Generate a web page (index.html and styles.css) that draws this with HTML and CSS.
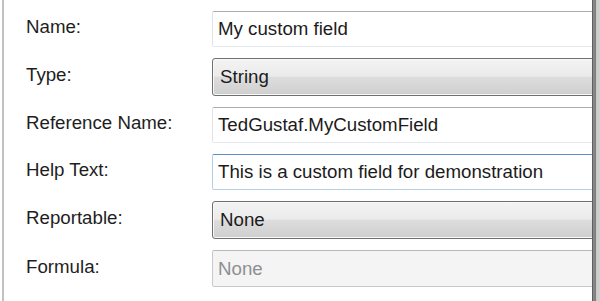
FILE: index.html
```html
<!DOCTYPE html>
<html lang="en">

<head>
    <meta charset="UTF-8">
    <title>Custom Field</title>
    <link rel="stylesheet" href="styles.css">
</head>

<body>
    <div class="window">
        <div class="panel">
            <div class="form">
                <label class="field-label">Name:</label>
                <div class="textbox">My custom field</div>

                <label class="field-label">Type:</label>
                <div class="combo">String</div>

                <label class="field-label">Reference Name:</label>
                <div class="textbox">TedGustaf.MyCustomField</div>

                <label class="field-label">Help Text:</label>
                <div class="textbox focused">This is a custom field for demonstration</div>

                <label class="field-label">Reportable:</label>
                <div class="combo">None</div>

                <label class="field-label">Formula:</label>
                <div class="textbox disabled">None</div>
            </div>
        </div>
        <div class="frame-edge"></div>
    </div>
</body>

</html>
```

FILE: styles.css
```css
* {
    box-sizing: border-box;
    margin: 0;
    padding: 0;
}

body {
    font-family: "Liberation Sans", Arial, sans-serif;
    font-size: 18.7px;
    color: #1b1b1b;
    background-color: #fff;
}

.window {
    display: flex;
    width: 600px;
    height: 301px;
    padding-left: 2px;
    overflow: hidden;
}

.panel {
    flex: 1;
    border-left: 2px solid #c2c2c2;
    padding-left: 22px;
    overflow: hidden;
}

.form {
    display: grid;
    grid-template-columns: 186px 1fr;
    grid-template-rows: 36px 38px 36px 36px 38px 37px;
    row-gap: 11px;
    padding-top: 11px;
    margin-right: -12px;
}

.field-label {
    align-self: center;
    padding-bottom: 4px;
    color: #1e1e1e;
}

.textbox {
    display: flex;
    align-items: center;
    padding-left: 5px;
    background-color: #fff;
    border: 1px solid #e2e3ea;
    border-top-color: #abadb3;
    border-bottom-color: #e3e9ef;
    border-radius: 2px;
}

.textbox.focused { /* help text has the caret */
    border-color: #b5cfe7;
    border-top-color: #5a8fc4;
}

.textbox.disabled {
    background-color: #f4f4f4;
    border-color: #c9c9c9;
    border-top-color: #b9b9b9;
    color: #8d8f93;
}

.combo {
    display: flex;
    align-items: center;
    padding-left: 7px;
    border: 1px solid #707070;
    border-radius: 3px;
    box-shadow: inset 0 0 0 1px #f8f8f8;
    background: linear-gradient(to bottom, #f3f3f3 0%, #ebebeb 48%, #dddddd 50%, #cfcfcf 100%);
}

.frame-edge {
    width: 8px;
    flex-shrink: 0;
    background: linear-gradient(to right, #5e5e5e 0, #5e5e5e 1px, #8a8a8a 1px, #7c7c7c 4px, #c9c9c9 4px, #d2d2d2 8px);
}
```
